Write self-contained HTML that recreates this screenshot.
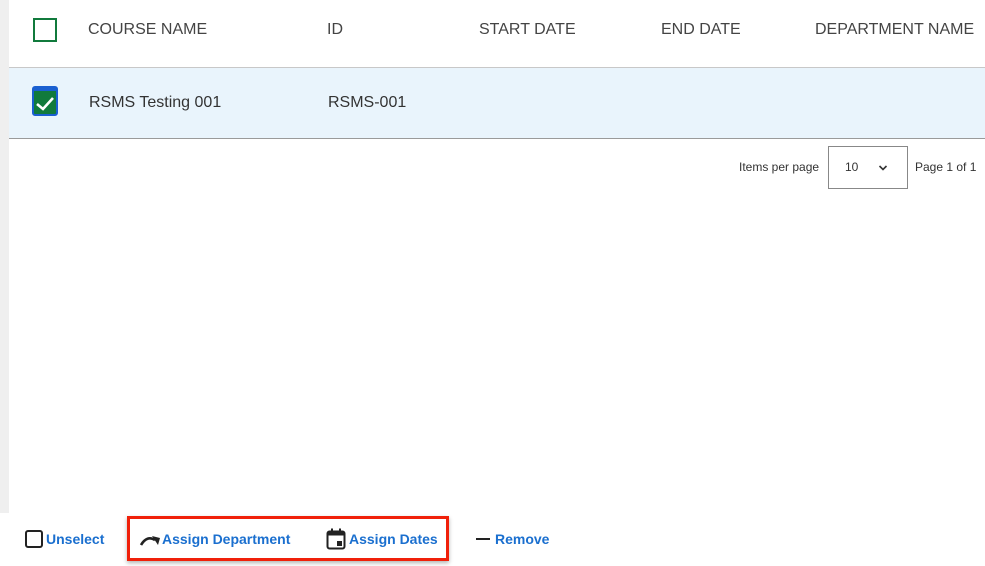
<!DOCTYPE html>
<html><head><style>
*{margin:0;padding:0;box-sizing:border-box}
body{width:985px;height:566px;background:#fff;font-family:"Liberation Sans",Arial,sans-serif;position:relative;overflow:hidden}
.strip{position:absolute;left:0;top:0;width:9px;height:513px;background:#efefef}
.t{position:absolute;color:#333;font-size:16px}
.hdr{color:#444}
.row{position:absolute;left:9px;top:67px;width:976px;height:72px;background:#e9f4fc;border-top:1px solid #c8c8c8;border-bottom:1px solid #9a9a9a}
.b{position:absolute;color:#1a6fcf;font-weight:bold;font-size:14px;top:531px}
.red{position:absolute;left:127px;top:516px;width:322px;height:45px;border:3px solid #f0200a;box-shadow:0 2px 4px rgba(0,0,0,.3)}
</style></head><body>
<div class="strip"></div>
<div style="position:absolute;left:33px;top:18px;width:24px;height:24px;border:2px solid #117a3c"></div>
<div class="t hdr" style="left:88px;top:21px">COURSE NAME</div>
<div class="t hdr" style="left:327px;top:21px">ID</div>
<div class="t hdr" style="left:479px;top:21px">START DATE</div>
<div class="t hdr" style="left:661px;top:21px">END DATE</div>
<div class="t hdr" style="left:815px;top:21px">DEPARTMENT NAME</div>
<div class="row"></div>
<div style="position:absolute;left:32px;top:86px;width:26px;height:30px;background:#117a3c;border:2px solid #1a5fd0;border-radius:3px;border-top-width:5px"></div>
<svg style="position:absolute;left:35px;top:93px" width="20" height="20" viewBox="0 0 20 20"><path d="M2 11 L8 16 L18 5" stroke="#fff" stroke-width="2.6" fill="none"/></svg>
<div class="t" style="left:89px;top:94px">RSMS Testing 001</div>
<div class="t" style="left:328px;top:94px">RSMS-001</div>
<div class="t" style="left:739px;top:160px;font-size:12px">Items per page</div>
<div style="position:absolute;left:828px;top:146px;width:80px;height:43px;border:1px solid #888"></div>
<div class="t" style="left:845px;top:160px;font-size:12px">10</div>
<svg style="position:absolute;left:878px;top:164px" width="10" height="8"><path d="M1.5 2 L5 5.5 L8.5 2" stroke="#333" stroke-width="1.6" fill="none"/></svg>
<div class="t" style="left:915px;top:160px;font-size:12px">Page 1 of 1</div>
<div style="position:absolute;left:25px;top:530px;width:18px;height:18px;border:2px solid #222;border-radius:3px"></div>
<div class="b" style="left:46px">Unselect</div>
<div class="red"></div>
<svg style="position:absolute;left:139px;top:533px" width="22" height="14" viewBox="0 0 22 14"><path d="M2 12 Q8 2 16 7" stroke="#222" stroke-width="2.6" fill="none"/><path d="M13 3 L21 5 L19 12 Z" fill="#222"/></svg>
<div class="b" style="left:162px">Assign Department</div>
<svg style="position:absolute;left:326px;top:528px" width="21" height="22" viewBox="0 0 21 22"><rect x="1.5" y="3.5" width="17" height="17" rx="2" stroke="#222" stroke-width="2" fill="none"/><rect x="1.5" y="3.5" width="17" height="4" fill="#222"/><rect x="5" y="0.5" width="2" height="4" fill="#222"/><rect x="13" y="0.5" width="2" height="4" fill="#222"/><rect x="11" y="13" width="5" height="5" fill="#222"/></svg>
<div class="b" style="left:349px">Assign Dates</div>
<div style="position:absolute;left:476px;top:538px;width:14px;height:2px;background:#222"></div>
<div class="b" style="left:495px">Remove</div>
</body></html>
